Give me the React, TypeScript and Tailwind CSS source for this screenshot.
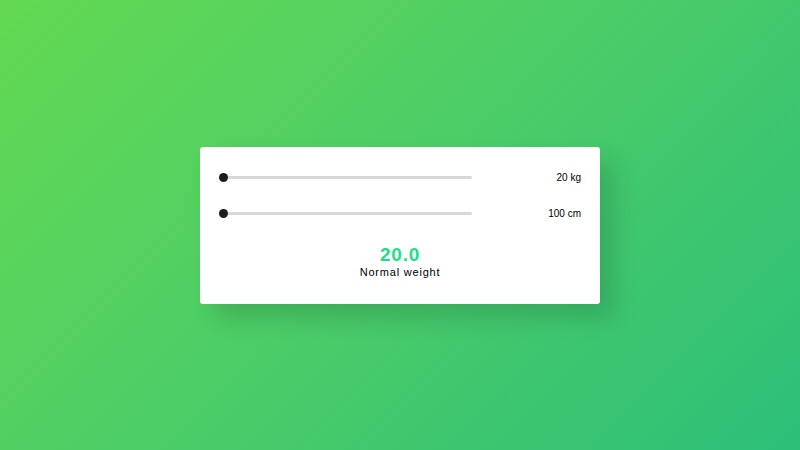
import React, { useState } from 'react';

interface SliderRowProps {
  id: string;
  label: string;
  unit: string;
  min: number;
  max: number;
  value: number;
  onChange: (value: number) => void;
}

function SliderRow({ id, label, unit, min, max, value, onChange }: SliderRowProps) {
  return (
    <div className="flex items-center justify-between">
      <input
        type="range"
        id={id}
        aria-label={label}
        min={min}
        max={max}
        value={value}
        onChange={(e) => onChange(Number(e.target.value))}
        className="w-[70%] h-[3px] appearance-none bg-[#d8d8d8] rounded-full outline-none [&::-webkit-slider-thumb]:appearance-none [&::-webkit-slider-thumb]:size-[9px] [&::-webkit-slider-thumb]:rounded-full [&::-webkit-slider-thumb]:bg-[#1c1c1c]"
      />
      <output htmlFor={id} className="text-[10px] leading-[13px] text-black">
        {value} {unit}
      </output>
    </div>
  );
}

function getCategory(bmi: number) {
  if (bmi < 18.5) return { text: 'Underweight', color: 'text-[#ffc44d]' };
  if (bmi < 25) return { text: 'Normal weight', color: 'text-[#1be086]' };
  if (bmi < 30) return { text: 'Overweight', color: 'text-[#ff884d]' };
  return { text: 'Obese', color: 'text-[#ff5e57]' };
}

export default function App() {
  const [weight, setWeight] = useState(20);
  const [height, setHeight] = useState(100);

  const bmi = weight / (height / 100) ** 2;
  const category = getCategory(bmi);

  return (
    <main className="min-h-screen flex items-center justify-center bg-linear-135 from-[#63d951] to-[#2bbf78] font-['Liberation_Sans',Arial,sans-serif]">
      <div className="w-1/2 bg-white rounded-[3px] px-[19px] pt-6 pb-[26px] shadow-[14px_14px_24px_rgba(0,0,0,0.15)]">
        {/* Inputs */}
        <div className="space-y-[23px]">
          <SliderRow id="weight" label="Weight" unit="kg" min={20} max={200} value={weight} onChange={setWeight} />
          <SliderRow id="height" label="Height" unit="cm" min={100} max={250} value={height} onChange={setHeight} />
        </div>

        {/* Result */}
        <div className="mt-6 text-center tracking-wider">
          <h1 className={`text-[19px] leading-[22px] font-bold ${category.color}`}>{bmi.toFixed(1)}</h1>
          <p className="text-[11px] leading-3 text-black">{category.text}</p>
        </div>
      </div>
    </main>
  );
}
